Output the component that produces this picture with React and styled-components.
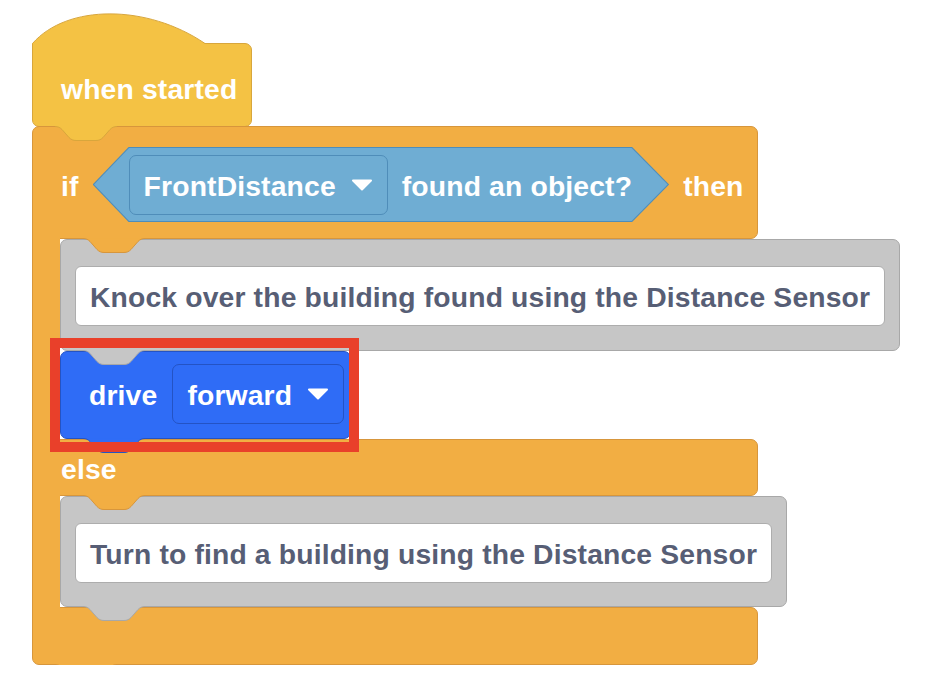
import React from 'react'
import styled, { createGlobalStyle } from 'styled-components'

const GlobalStyle = createGlobalStyle`
  *{box-sizing:border-box;}
  html,body{margin:0;background:#fff;}
  body{font-family:"Liberation Sans",Helvetica,Arial,sans-serif;}
`

// block palettes: [fill, outline]
const HAT = ['#F4C244', '#D8A63C']
const CTRL = ['#F2AE43', '#D7963C']
const GREY = ['#C6C6C6', '#A8A8A8']
const DRIVE = ['#2F6CF6', '#2453C4']

const TAB_PATH = 'M0,0.5 C3,0.5 5,1.5 7,3.5 L14,11.5 C16,13.5 18,14.5 21,14.5 H41 C44,14.5 46,13.5 48,11.5 L55,3.5 C57,1.5 59,0.5 62,0.5'

const TabSvg = styled.svg`
position:absolute;
top:100%;
left:${p => p.$left}px;
z-index:2;
overflow:visible;
`

function Tab({ left = 22, colors }) {
  return (
    <TabSvg $left={left} width="62" height="16" viewBox="0 0 62 16">
      <rect x="1" y="0" width="60" height="1" fill={colors[0]} />
      <path d={TAB_PATH + ' Z'} fill={colors[0]} />
      <path d={TAB_PATH} fill="none" stroke={colors[1]} />
    </TabSvg>
  )
}

function Caret() {
  return (
    <svg width="22" height="12" viewBox="0 0 22 12">
      <path d="M2,1.5 H20 L11,10.5 Z" fill="#fff" stroke="#fff" strokeWidth="2" strokeLinejoin="round" />
    </svg>
  )
}

const Canvas = styled.div`
display:flex;
flex-direction:column;
align-items:flex-start;
padding:12px 0 0 32px;
`

const Hat = styled.div`
display:flex;
flex-direction:column;
align-items:flex-start;
`
const HatCap = styled.svg`
display:block;
position:relative;
z-index:1;
margin-bottom:-1px;
`
const HatBody = styled.div`
position:relative;
height:84px;
display:flex;
align-items:center;
padding:5px 14px 0 28px;
background:${HAT[0]};
border:1px solid ${HAT[1]};
border-radius:0 7px 7px 7px;
`

const Label = styled.span`
padding-top:3px;
color:#fff;
font-size:28.3px;
font-weight:bold;
letter-spacing:0.15px;
white-space:nowrap;
`

const CBlock = styled.div`
display:flex;
flex-direction:column;
align-items:flex-start;
margin-top:-1px;
`
const Arm = styled.div`
position:relative;
width:726px;
height:${p => p.$h}px;
display:flex;
align-items:center;
gap:14px;
padding:${p => p.$pad || '1px 0 0 28px'};
background:${CTRL[0]};
border:1px solid ${CTRL[1]};
border-radius:${p => p.$radius};
`
const Mouth = styled.div`
display:flex;
align-items:stretch;
`
const Spine = styled.div`
position:relative;
z-index:1;
width:28px;
margin:-1px 0;
background:${CTRL[0]};
border-left:1px solid ${CTRL[1]};
`
const Stack = styled.div`
display:flex;
flex-direction:column;
align-items:flex-start;
`

const Hexagon = styled.div`
position:relative;
isolation:isolate;
height:75px;
display:flex;
align-items:center;
gap:14px;
padding:0 37px 0 36px;
&::before{
  content:'';
  position:absolute;
  inset:0;
  z-index:-1;
  background:#4F8DB9;
  clip-path:polygon(36px 0,calc(100% - 37px) 0,100% 50%,calc(100% - 37px) 100%,36px 100%,0 50%);
}
&::after{
  content:'';
  position:absolute;
  inset:1px 1.5px;
  z-index:-1;
  background:#6FADD3;
  clip-path:polygon(35px 0,calc(100% - 36px) 0,100% 50%,calc(100% - 36px) 100%,35px 100%,0 50%);
}
`
const Dropdown = styled.div`
height:60px;
display:flex;
align-items:center;
gap:15px;
padding:0 14px;
background:${p => p.$bg};
border:1px solid ${p => p.$line};
border-radius:7px;
`

const Comment = styled.div`
position:relative;
display:flex;
padding:26px 14px ${p => p.$pb}px;
background:${GREY[0]};
border:1px solid ${GREY[1]};
border-radius:7px;
`
const Note = styled.div`
height:60px;
display:flex;
align-items:center;
padding:3px 14px 0;
background:#fff;
border:1px solid #ADADAD;
border-radius:6px;
color:#575E75;
font-size:28.3px;
font-weight:bold;
letter-spacing:0.15px;
white-space:nowrap;
`

const Drive = styled.div`
position:relative;
display:flex;
align-items:center;
gap:15px;
padding:12px 6px 14px 28px;
background:${DRIVE[0]};
border:1px solid ${DRIVE[1]};
border-radius:7px;
`
const Highlight = styled.div`
position:absolute;
inset:-14px -9px -14px -11px;
z-index:3;
border:10px solid #E9402A;
pointer-events:none;
`

export default function App() {
  return (
    <Canvas>
      <GlobalStyle />
      <Hat>
        <HatCap width="175" height="32" viewBox="0 0 175 32">
          <path d="M0.5,32 V31.5 C35,-8 115,-8 173,31.5 V32 Z" fill={HAT[0]} />
          <path d="M0.5,31.5 C35,-8 115,-8 173,31.5" fill="none" stroke={HAT[1]} />
        </HatCap>
        <HatBody>
          <Label>when started</Label>
          <Tab colors={HAT} />
        </HatBody>
      </Hat>

      <CBlock>
        <Arm $h={113} $pad="4px 0 0 28px" $radius="7px 7px 7px 0">
          <Label>if</Label>
          <Hexagon>
            <Dropdown $bg="#6FADD3" $line="#4F8DB9">
              <Label>FrontDistance</Label>
              <Caret />
            </Dropdown>
            <Label>found an object?</Label>
          </Hexagon>
          <Label>then</Label>
          <Tab left={50} colors={CTRL} />
        </Arm>

        <Mouth>
          <Spine />
          <Stack>
            <Comment $pb={24}>
              <Note>Knock over the building found using the Distance Sensor</Note>
              <Tab colors={GREY} />
            </Comment>
            <Drive>
              <Label>drive</Label>
              <Dropdown $bg={DRIVE[0]} $line={DRIVE[1]}>
                <Label>forward</Label>
                <Caret />
              </Dropdown>
              <Tab colors={DRIVE} />
              <Highlight />
            </Drive>
          </Stack>
        </Mouth>

        <Arm $h={57} $radius="0 7px 7px 0">
          <Label>else</Label>
          <Tab left={50} colors={CTRL} />
        </Arm>

        <Mouth>
          <Spine />
          <Stack>
            <Comment $pb={23}>
              <Note>Turn to find a building using the Distance Sensor</Note>
              <Tab colors={GREY} />
            </Comment>
          </Stack>
        </Mouth>

        <Arm $h={58} $radius="0 7px 7px 7px">
          <Tab colors={CTRL} />
        </Arm>
      </CBlock>
    </Canvas>
  )
}
